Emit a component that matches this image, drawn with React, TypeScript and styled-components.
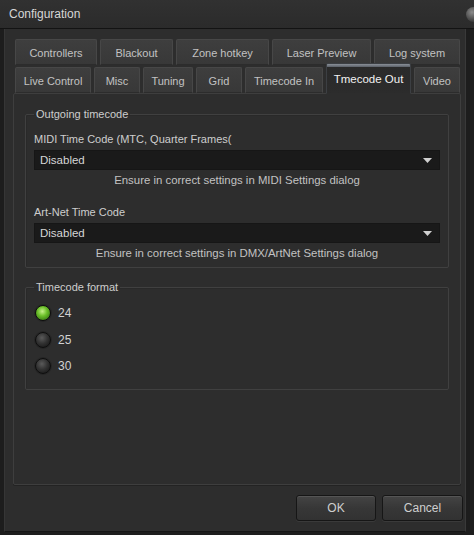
import React from "react";
import styled, { createGlobalStyle } from "styled-components";

const colours = {
    frame: "#1d1d1d",
    title: "#2b2b2b",
    body: "#2d2d2d",
    tab: "#3a3a3a",
    tabBorder: "#474747",
    panelBorder: "#3e3e3e",
    field: "#1a1a1a",
    text: "#cdcdcd",
    dim: "#c2c2c2"
};

const GlobalStyle = createGlobalStyle`
  html, body {
    margin: 0;
    padding: 0;
    background: ${colours.frame};
  }
  body {
    font-family: "Liberation Sans", Arial, sans-serif;
  }
`;

const Window =
  styled.div`
  width: 474px;
  height: 535px;
  display: flex;
  flex-direction: column;
  background: ${colours.frame};
  overflow: hidden;
  `;

const TitleBar =
  styled.div`
  flex: none;
  height: 28px;
  display: flex;
  align-items: center;
  justify-content: space-between;
  padding-left: 9px;
  background: linear-gradient(#313131, ${colours.title});
  border-bottom: 1px solid #131313;
  color: #d6d6d6;
  font-size: 12px;
  `;

const CloseKnob =
  styled.span`
  width: 15px;
  height: 15px;
  border-radius: 50%;
  margin-right: -7px;
  background: radial-gradient(circle at 40% 35%, #8c8c8c, #4c4c4c 55%, #222 100%);
  `;

const Body =
  styled.div`
  flex: 1;
  margin: 0 8px 4px 4px;
  padding: 10px 4px 10px 8px;
  display: flex;
  flex-direction: column;
  background: ${colours.body};
  border-left: 1px solid #363636;
  border-right: 1px solid #393939;
  border-bottom: 1px solid #151515;
  `;

const TabBar =
  styled.div`
  flex: none;
  display: flex;
  flex-direction: column;
  gap: 2px;
  padding-left: 2px;
  `;

const TabRow =
  styled.div`
  display: flex;
  align-items: flex-end;
  gap: 3px;
  height: 26px;
  `;

interface TabProps {
  $width: number;
  $active?: boolean;
}

const Tab =
  styled.div<TabProps>`
  flex: none;
  box-sizing: border-box;
  width: ${props => props.$width}px;
  height: ${props => props.$active ? 31 : 26}px;
  margin-bottom: ${props => props.$active ? -1 : 0}px;
  position: relative;
  z-index: ${props => props.$active ? 1 : 0};
  display: flex;
  align-items: center;
  justify-content: center;
  padding-top: ${props => props.$active ? 0 : 1}px;
  border: 1px solid ${props => props.$active ? "#3c3f43" : colours.tabBorder};
  border-bottom-color: ${props => props.$active ? colours.body : "#2c2c2c"};
  border-radius: 2px 2px 0 0;
  background: ${
    props =>
        props.$active
            ? `linear-gradient(#8a9098, #5b6068 3px, #2a2a2a 3px, #2c2c2c)`
            : `linear-gradient(#3e3e3e, #383838)` };
  color: ${props => props.$active ? "#f2f2f2" : colours.dim};
  font-size: ${props => props.$active ? 11.5 : 11}px;
  white-space: nowrap;
  `;

const Panel =
  styled.div`
  flex: none;
  box-sizing: border-box;
  height: 392px;
  padding: 13px 11px 0 11px;
  display: flex;
  flex-direction: column;
  background: ${colours.body};
  border: 1px solid ${colours.panelBorder};
  border-radius: 2px;
  box-shadow: 0 1px 0 #232323;
  `;

const GroupBox =
  styled.fieldset<{ $gap?: number }>`
  margin: ${props => props.$gap ?? 0}px 0 0 0;
  padding: 0 8px;
  min-width: 0;
  border: 1px solid #404040;
  border-radius: 2px;
  box-shadow: inset 1px 1px 0 #292929;
  display: flex;
  flex-direction: column;
  `;

const GroupTitle =
  styled.legend`
  padding: 0 2px;
  font-size: 11px;
  line-height: 14px;
  color: ${colours.text};
  `;

const FieldLabel =
  styled.div<{ $gap: number }>`
  margin-top: ${props => props.$gap}px;
  font-size: 11px;
  line-height: 14px;
  color: ${colours.text};
  white-space: nowrap;
  `;

const ComboBox =
  styled.div`
  margin-top: 4px;
  height: 20px;
  box-sizing: border-box;
  display: flex;
  align-items: center;
  justify-content: space-between;
  padding: 0 7px 0 5px;
  background: ${colours.field};
  border: 1px solid #161616;
  color: #d6d6d6;
  font-size: 11.5px;
  `;

const DropArrow =
  styled.svg`
  width: 9px;
  height: 5px;
  `;

const Hint =
  styled.div`
  margin-top: 3px;
  font-size: 11.4px;
  line-height: 14px;
  text-align: center;
  color: ${colours.dim};
  `;

const RadioList =
  styled.div`
  padding: 6px 0 9px 1px;
  display: flex;
  flex-direction: column;
  `;

const RadioRow =
  styled.label`
  height: 26.5px;
  display: flex;
  align-items: center;
  gap: 7px;
  font-size: 12px;
  color: #d2d2d2;
  `;

const RadioDot =
  styled.span<{ $checked: boolean }>`
  width: 16px;
  height: 16px;
  box-sizing: border-box;
  border-radius: 50%;
  border: 1px solid #0e0e0e;
  background: ${
    props =>
        props.$checked
            ? "radial-gradient(circle at 45% 38%, #c6f08a, #6cc02a 40%, #2f6d10 90%)"
            : "radial-gradient(circle at 42% 35%, #5a5a5a, #333 45%, #161616 90%)" };
  box-shadow: 0 0 0 1px #262626;
  `;

const Footer =
  styled.div`
  margin: 10px -2px 0 0;
  display: flex;
  justify-content: flex-end;
  gap: 6px;
  `;

const DialogButton =
  styled.button<{ $width: number }>`
  width: ${props => props.$width}px;
  height: 26px;
  padding: 0;
  font-family: inherit;
  font-size: 12px;
  color: #cfcfcf;
  background: linear-gradient(#444, #373737 50%, #323232);
  border: 1px solid #161616;
  border-radius: 3px;
  box-shadow: inset 0 1px 0 #555, 0 1px 0 #3a3a3a;
  `;

const tabRows = [
    [
        { label: "Controllers", width: 82 },
        { label: "Blackout", width: 73 },
        { label: "Zone hotkey", width: 93 },
        { label: "Laser Preview", width: 99 },
        { label: "Log system", width: 86 }
    ],
    [
        { label: "Live Control", width: 76 },
        { label: "Misc", width: 46 },
        { label: "Tuning", width: 50 },
        { label: "Grid", width: 46 },
        { label: "Timecode In", width: 78 },
        { label: "Tmecode Out", width: 85, active: true },
        { label: "Video", width: 46 }
    ]
];

const rates = ["24", "25", "30"];

const Combo =
  ({ value }: { value: string }) => (
      <ComboBox>
          <span>{ value }</span>
          <DropArrow viewBox="0 0 9 5">
              <path d="M0 0 H9 L4.5 5 Z" fill="#d0d0d0"/>
          </DropArrow>
      </ComboBox>
  );

const App =
  () => {
      const selectedRate = "24";

      return (
          <>
              <GlobalStyle/>
              <Window>
                  <TitleBar>
                      <span>Configuration</span>
                      <CloseKnob/>
                  </TitleBar>
                  <Body>
                      <TabBar>
                          { tabRows.map((row, i) => (
                              <TabRow key={i}>
                                  { row.map(tab => (
                                      <Tab
                                          key={tab.label}
                                          $width={tab.width}
                                          $active={"active" in tab}>
                                          { tab.label }
                                      </Tab>
                                  )) }
                              </TabRow>
                          )) }
                      </TabBar>
                      <Panel>
                          <GroupBox>
                              <GroupTitle>Outgoing timecode</GroupTitle>
                              <FieldLabel $gap={11}>MIDI Time Code (MTC, Quarter Frames(</FieldLabel>
                              <Combo value="Disabled"/>
                              <Hint>Ensure in correct settings in MIDI Settings dialog</Hint>
                              <FieldLabel $gap={18}>Art-Net Time Code</FieldLabel>
                              <Combo value="Disabled"/>
                              <Hint>Ensure in correct settings in DMX/ArtNet Settings dialog</Hint>
                              <div style={{ height: 7 }}/>
                          </GroupBox>
                          <GroupBox $gap={12}>
                              <GroupTitle>Timecode format</GroupTitle>
                              <RadioList>
                                  { rates.map(rate => (
                                      <RadioRow key={rate}>
                                          <RadioDot $checked={rate === selectedRate}/>
                                          { rate }
                                      </RadioRow>
                                  )) }
                              </RadioList>
                          </GroupBox>
                      </Panel>
                      <Footer>
                          <DialogButton $width={80}>OK</DialogButton>
                          <DialogButton $width={81}>Cancel</DialogButton>
                      </Footer>
                  </Body>
              </Window>
          </>
      );
  };

export default App;
